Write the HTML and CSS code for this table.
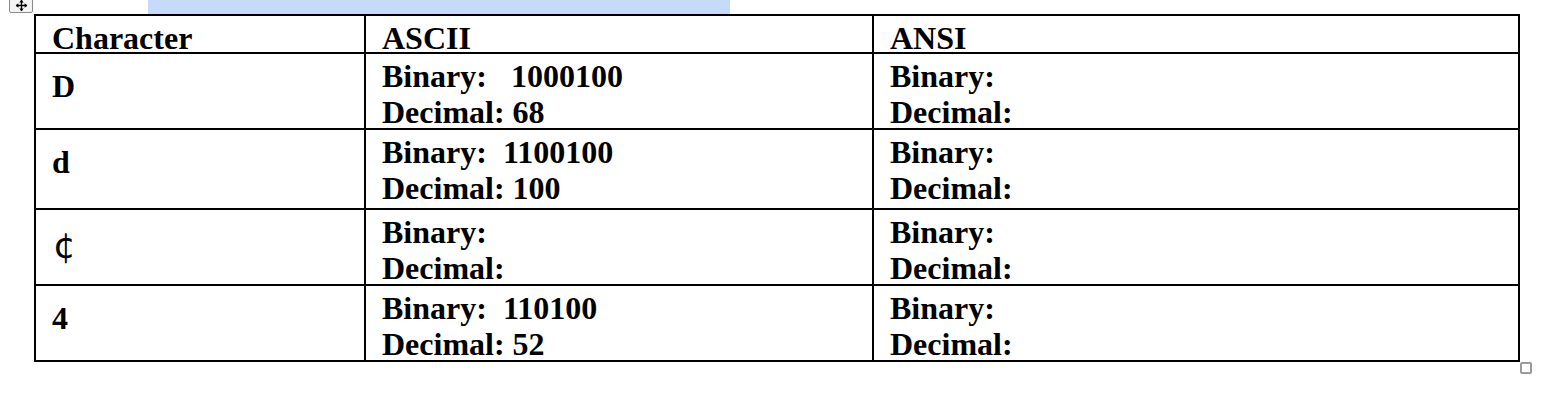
FILE: index.html
```html
<!DOCTYPE html>
<html>
<head>
<meta charset="utf-8">
<link rel="stylesheet" href="styles.css">
</head>
<body>
<div class="page">
  <div class="sel-bar"></div>
  <div class="move-handle">
    <svg width="13" height="13" viewBox="0 0 13 13">
      <path d="M6.5 1 V12 M1 6.5 H12" stroke="#000" stroke-width="1.3" fill="none"/>
      <path d="M4.3 9.6 L6.5 12.3 L8.7 9.6 Z M4.3 3.4 L6.5 0.7 L8.7 3.4 Z M3.4 4.3 L0.7 6.5 L3.4 8.7 Z M9.6 4.3 L12.3 6.5 L9.6 8.7 Z" fill="#000"/>
    </svg>
  </div>
  <div class="table">
    <div class="cell head">Character</div>
    <div class="cell head">ASCII</div>
    <div class="cell head">ANSI</div>

    <div class="cell ch">D</div>
    <div class="cell val">Binary:   1000100<br>Decimal: 68</div>
    <div class="cell val">Binary:<br>Decimal:</div>

    <div class="cell ch">d</div>
    <div class="cell val">Binary:  1100100<br>Decimal: 100</div>
    <div class="cell val">Binary:<br>Decimal:</div>

    <div class="cell ch"><span class="cent">¢</span></div>
    <div class="cell val">Binary:<br>Decimal:</div>
    <div class="cell val">Binary:<br>Decimal:</div>

    <div class="cell ch">4</div>
    <div class="cell val">Binary:  110100<br>Decimal: 52</div>
    <div class="cell val">Binary:<br>Decimal:</div>
  </div>
  <div class="resize-handle"></div>
</div>
</body>
</html>
```
FILE: styles.css
```css
html, body {
  margin: 0;
  padding: 0;
  background: #ffffff;
}
.page {
  position: relative;
  width: 1554px;
  height: 400px;
  overflow: hidden;
}
.sel-bar {
  margin-left: 148px;
  width: 582px;
  height: 14px;
  background: #c6daf9;
}
.move-handle {
  position: absolute;
  left: 9px;
  top: -12px;
  width: 24px;
  height: 25px;
  box-sizing: border-box;
  border: 1px solid #8c8c8c;
  border-radius: 2px;
  background: #f3f3f3;
  display: flex;
  align-items: flex-end;
  justify-content: center;
  padding-bottom: 2px;
}
.move-handle svg {
  display: block;
  margin-bottom: -2px;
}
.table {
  margin-left: 34px;
  width: 1486px;
  box-sizing: border-box;
  display: grid;
  grid-template-columns: 328px 506px 644px;
  grid-template-rows: 36px 74px 78px 74px 74px;
  gap: 2px;
  padding: 2px;
  background: #000;
}
.cell {
  background: #fff;
  font-family: "Liberation Serif", "Times New Roman", serif;
  font-weight: bold;
  font-size: 32px;
  line-height: 36px;
  color: #000;
  padding: 4px 16px 0 16px;
  white-space: pre;
  overflow: visible;
  min-height: 0;
}
.ch {
  padding-top: 14px;
}
.cent {
  font-family: "DejaVu Sans", sans-serif;
  font-weight: normal;
  font-size: 36px;
  line-height: 36px;
  display: inline-block;
  padding-left: 1px;
  transform: translateY(4px);
}
.resize-handle {
  position: absolute;
  left: 1520px;
  top: 362px;
  width: 12px;
  height: 12px;
  box-sizing: border-box;
  border: 2px solid #9a9a9a;
  border-radius: 2px;
  background: #fff;
}
```
